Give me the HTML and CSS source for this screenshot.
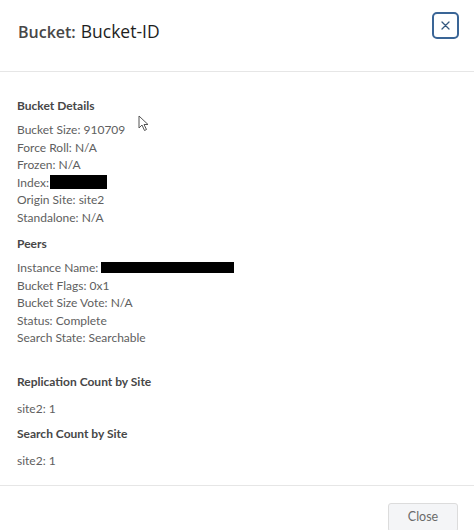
FILE: index.html
```html
<!DOCTYPE html>
<html>
<head>
<meta charset="utf-8">
<link rel="stylesheet" href="styles.css">
</head>
<body>
<div class="modal">
  <header class="modal-header">
    <h1 class="title"><span class="title-label">Bucket:</span><span class="title-id">Bucket-ID</span></h1>
    <button class="close-x" aria-label="Close">
      <svg width="11" height="11" viewBox="0 0 11 11"><path d="M2 2 L9 9 M9 2 L2 9" stroke="#34597f" stroke-width="1.3" stroke-linecap="round"/></svg>
    </button>
  </header>
  <main class="modal-body">
    <section class="group">
      <h2 class="heading">Bucket Details</h2>
      <div class="line">Bucket Size: 910709</div>
      <div class="line">Force Roll: N/A</div>
      <div class="line">Frozen: N/A</div>
      <div class="line">Index:<span class="redact redact-index"></span></div>
      <div class="line">Origin Site: site2</div>
      <div class="line">Standalone: N/A</div>
    </section>
    <section class="group">
      <h2 class="heading">Peers</h2>
      <div class="line">Instance Name: <span class="redact redact-name"></span></div>
      <div class="line">Bucket Flags: 0x1</div>
      <div class="line">Bucket Size Vote: N/A</div>
      <div class="line">Status: Complete</div>
      <div class="line">Search State: Searchable</div>
    </section>
    <section class="group count first-count">
      <h2 class="heading">Replication Count by Site</h2>
      <div class="line">site2: 1</div>
    </section>
    <section class="group count">
      <h2 class="heading">Search Count by Site</h2>
      <div class="line">site2: 1</div>
    </section>
  </main>
  <footer class="modal-footer">
    <button class="btn-close">Close</button>
  </footer>
  <svg class="cursor" width="12" height="17" viewBox="0 0 12 17"><path d="M1 1 L1 13 L4 10 L6.5 15.5 L8.5 14.5 L6 9.5 L10 9.5 Z" fill="#fff" stroke="#555" stroke-width="1" stroke-linejoin="round"/></svg>
</div>
</body>
</html>
```
FILE: styles.css
```css
html, body {
  margin: 0;
  padding: 0;
  background: #fff;
}
body {
  font-family: "Lato", "Liberation Sans", sans-serif;
  color: #5c5c5c;
}
.modal {
  position: relative;
  width: 474px;
  height: 530px;
  overflow: hidden;
  background: #fff;
}
.modal-header {
  height: 72px;
  border-bottom: 1px solid #e6e6e6;
  display: flex;
  align-items: flex-start;
  justify-content: space-between;
  padding: 0 15px 0 18px;
  box-sizing: border-box;
}
.title {
  margin: 14px 0 0 0;
  font-weight: normal;
  line-height: 24px;
  white-space: nowrap;
}
.title-label {
  font-family: "Open Sans", sans-serif;
  font-weight: 600;
  font-size: 16px;
  color: #474747;
  margin-right: 5px;
}
.title-id {
  font-family: "Open Sans", sans-serif;
  font-size: 17.5px;
  color: #1e1e1e;
}
.close-x {
  margin-top: 12px;
  width: 27px;
  height: 27px;
  border: 2px solid #3a6596;
  border-radius: 5px;
  background: #fff;
  display: flex;
  align-items: center;
  justify-content: center;
  padding: 0;
}
.modal-body {
  padding: 26px 17px 0 17px;
  height: 414px;
  box-sizing: border-box;
  border-bottom: 1px solid #e6e6e6;
}
.group {
  margin-bottom: 10px;
}
.heading {
  margin: 0 0 7px 0;
  font-size: 12px;
  font-weight: bold;
  color: #474747;
  line-height: 16px;
}
.line {
  font-size: 12px;
  line-height: 17.5px;
  color: #606060;
  display: flex;
  align-items: center;
  white-space: nowrap;
}
.redact {
  display: inline-block;
  background: #000;
}
.redact-index {
  width: 57px;
  height: 14px;
  margin-left: 1px;
}
.redact-name {
  width: 133px;
  height: 11px;
  margin-left: 3px;
}
.first-count {
  margin-top: 27px;
  margin-bottom: 9px;
}
.count .heading {
  margin-bottom: 10px;
}
.modal-footer {
  display: flex;
  justify-content: flex-end;
  padding: 17px 16px 0 0;
}
.btn-close {
  width: 70px;
  height: 29px;
  padding: 0 0 3px 0;
  background: #f4f5f7;
  border: 1px solid #dcdcdc;
  border-radius: 3px;
  font-family: "Lato", "Liberation Sans", sans-serif;
  font-size: 12.5px;
  color: #6a6a6a;
}
.cursor {
  position: absolute;
  left: 138px;
  top: 115px;
}
```
